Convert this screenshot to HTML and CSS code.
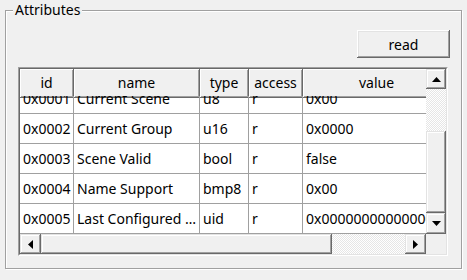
FILE: index.html
```html
<!DOCTYPE html>
<html>
<head>
<meta charset="utf-8">
<link rel="stylesheet" href="styles.css">
</head>
<body>
<div class="group">
  <span class="group-title">Attributes</span>
  <div class="toolbar"><button class="btn">read</button></div>
  <div class="table-frame">
    <div class="table-inner">
      <div class="viewport">
        <div class="header-row">
          <div class="hcell">id</div>
          <div class="hcell">name</div>
          <div class="hcell">type</div>
          <div class="hcell">access</div>
          <div class="hcell">value</div>
        </div>
        <div class="body">
          <div class="rows">
            <div class="cell">0x0001</div><div class="cell">Current Scene</div><div class="cell">u8</div><div class="cell">r</div><div class="cell">0x00</div>
            <div class="cell">0x0002</div><div class="cell">Current Group</div><div class="cell">u16</div><div class="cell">r</div><div class="cell">0x0000</div>
            <div class="cell">0x0003</div><div class="cell">Scene Valid</div><div class="cell">bool</div><div class="cell">r</div><div class="cell">false</div>
            <div class="cell">0x0004</div><div class="cell">Name Support</div><div class="cell">bmp8</div><div class="cell">r</div><div class="cell">0x00</div>
            <div class="cell">0x0005</div><div class="cell">Last Configured By</div><div class="cell">uid</div><div class="cell">r</div><div class="cell">0x0000000000000000</div>
          </div>
        </div>
      </div>
      <div class="vscroll">
        <div class="sbtn sbtn-up"><svg width="9" height="5" viewBox="0 0 9 5"><polygon points="4.5,0 9,5 0,5" fill="#000"/></svg></div>
        <div class="track vtrack"></div>
        <div class="thumb vthumb"></div>
        <div class="sbtn sbtn-down"><svg width="9" height="5" viewBox="0 0 9 5"><polygon points="0,0 9,0 4.5,5" fill="#000"/></svg></div>
      </div>
      <div class="hscroll">
        <div class="sbtn sbtn-left"><svg width="5" height="9" viewBox="0 0 5 9"><polygon points="0,4.5 5,0 5,9" fill="#000"/></svg></div>
        <div class="thumb hthumb"></div>
        <div class="track htrack"></div>
        <div class="sbtn sbtn-right"><svg width="5" height="9" viewBox="0 0 5 9"><polygon points="0,0 5,4.5 0,9" fill="#000"/></svg></div>
      </div>
      <div class="corner"></div>
    </div>
  </div>
</div>
</body>
</html>
```
FILE: styles.css
```css
html, body {
  margin: 0;
  padding: 0;
  background: #f0f0f0;
  font-family: "Noto Sans", "DejaVu Sans", sans-serif;
  font-size: 14px;
  color: #000;
}
body {
  width: 467px;
  height: 280px;
  overflow: hidden;
}
.group {
  position: relative;
  box-sizing: border-box;
  margin: 10px 0 0 5px;
  width: 457px;
  height: 259px;
  border: 1px solid #a0a0a0;
  box-shadow: inset 1px 1px 0 #fff, 1px 1px 0 #fff;
  padding: 19px 11px 0 12px;
}
.group-title {
  position: absolute;
  top: -11px;
  left: 7px;
  padding: 0 2px;
  background: #f0f0f0;
  line-height: 20px;
}
.toolbar {
  display: flex;
  justify-content: flex-end;
  height: 28px;
}
.btn {
  width: 93px;
  height: 28px;
  padding: 0;
  border: none;
  background: #f0f0f0;
  font: inherit;
  color: #000;
  box-shadow: inset -1px -1px 0 #696969, inset 1px 1px 0 #fff, inset -2px -2px 0 #a0a0a0, inset 2px 2px 0 #e3e3e3;
}
.table-frame {
  margin-top: 9px;
  width: 430px;
  height: 189px;
  box-sizing: border-box;
  border: 1px solid;
  border-color: #a0a0a0 #fff #fff #a0a0a0;
}
.table-inner {
  box-sizing: border-box;
  height: 100%;
  border: 1px solid;
  border-color: #696969 #e3e3e3 #e3e3e3 #696969;
  display: grid;
  grid-template-columns: 406px 20px;
  grid-template-rows: 165px 20px;
}
.viewport {
  overflow: hidden;
  background: #fff;
  display: flex;
  flex-direction: column;
}
.header-row, .rows {
  display: grid;
  grid-template-columns: 54px 126px 49px 54px 148px;
  width: 431px;
}
.header-row {
  height: 27px;
  flex: none;
}
.hcell {
  box-sizing: border-box;
  background: #f0f0f0;
  text-align: center;
  line-height: 28px;
  border-right: 1px solid #696969;
  border-bottom: 1px solid #696969;
  box-shadow: inset 1px 1px 0 #fff, inset -1px -1px 0 #a0a0a0;
  white-space: nowrap;
}
.body {
  flex: 1;
  overflow: hidden;
}
.rows {
  margin-top: -12px;
}
.cell {
  box-sizing: border-box;
  height: 30px;
  line-height: 29px;
  padding-left: 3px;
  border-right: 1px solid #a0a0a0;
  border-bottom: 1px solid #a0a0a0;
  white-space: nowrap;
  overflow: hidden;
  text-overflow: ellipsis;
}
.cell:nth-child(5n) {
  text-overflow: clip;
}
.vscroll {
  display: grid;
  grid-template-rows: 20px 42px 82px 21px;
}
.hscroll {
  display: grid;
  grid-template-columns: 21px 291px 73px 21px;
}
.corner {
  background: #f0f0f0;
}
.sbtn, .thumb {
  background: #f0f0f0;
  box-shadow: inset -1px -1px 0 #696969, inset 1px 1px 0 #e3e3e3, inset -2px -2px 0 #a0a0a0, inset 2px 2px 0 #fff;
}
.sbtn {
  display: flex;
  align-items: center;
  justify-content: center;
}
.sbtn svg {
  display: block;
}
.track {
  background: repeating-conic-gradient(#ffffff 0 25%, #e6e6e6 0 50%) 0 0 / 2px 2px;
}
```
